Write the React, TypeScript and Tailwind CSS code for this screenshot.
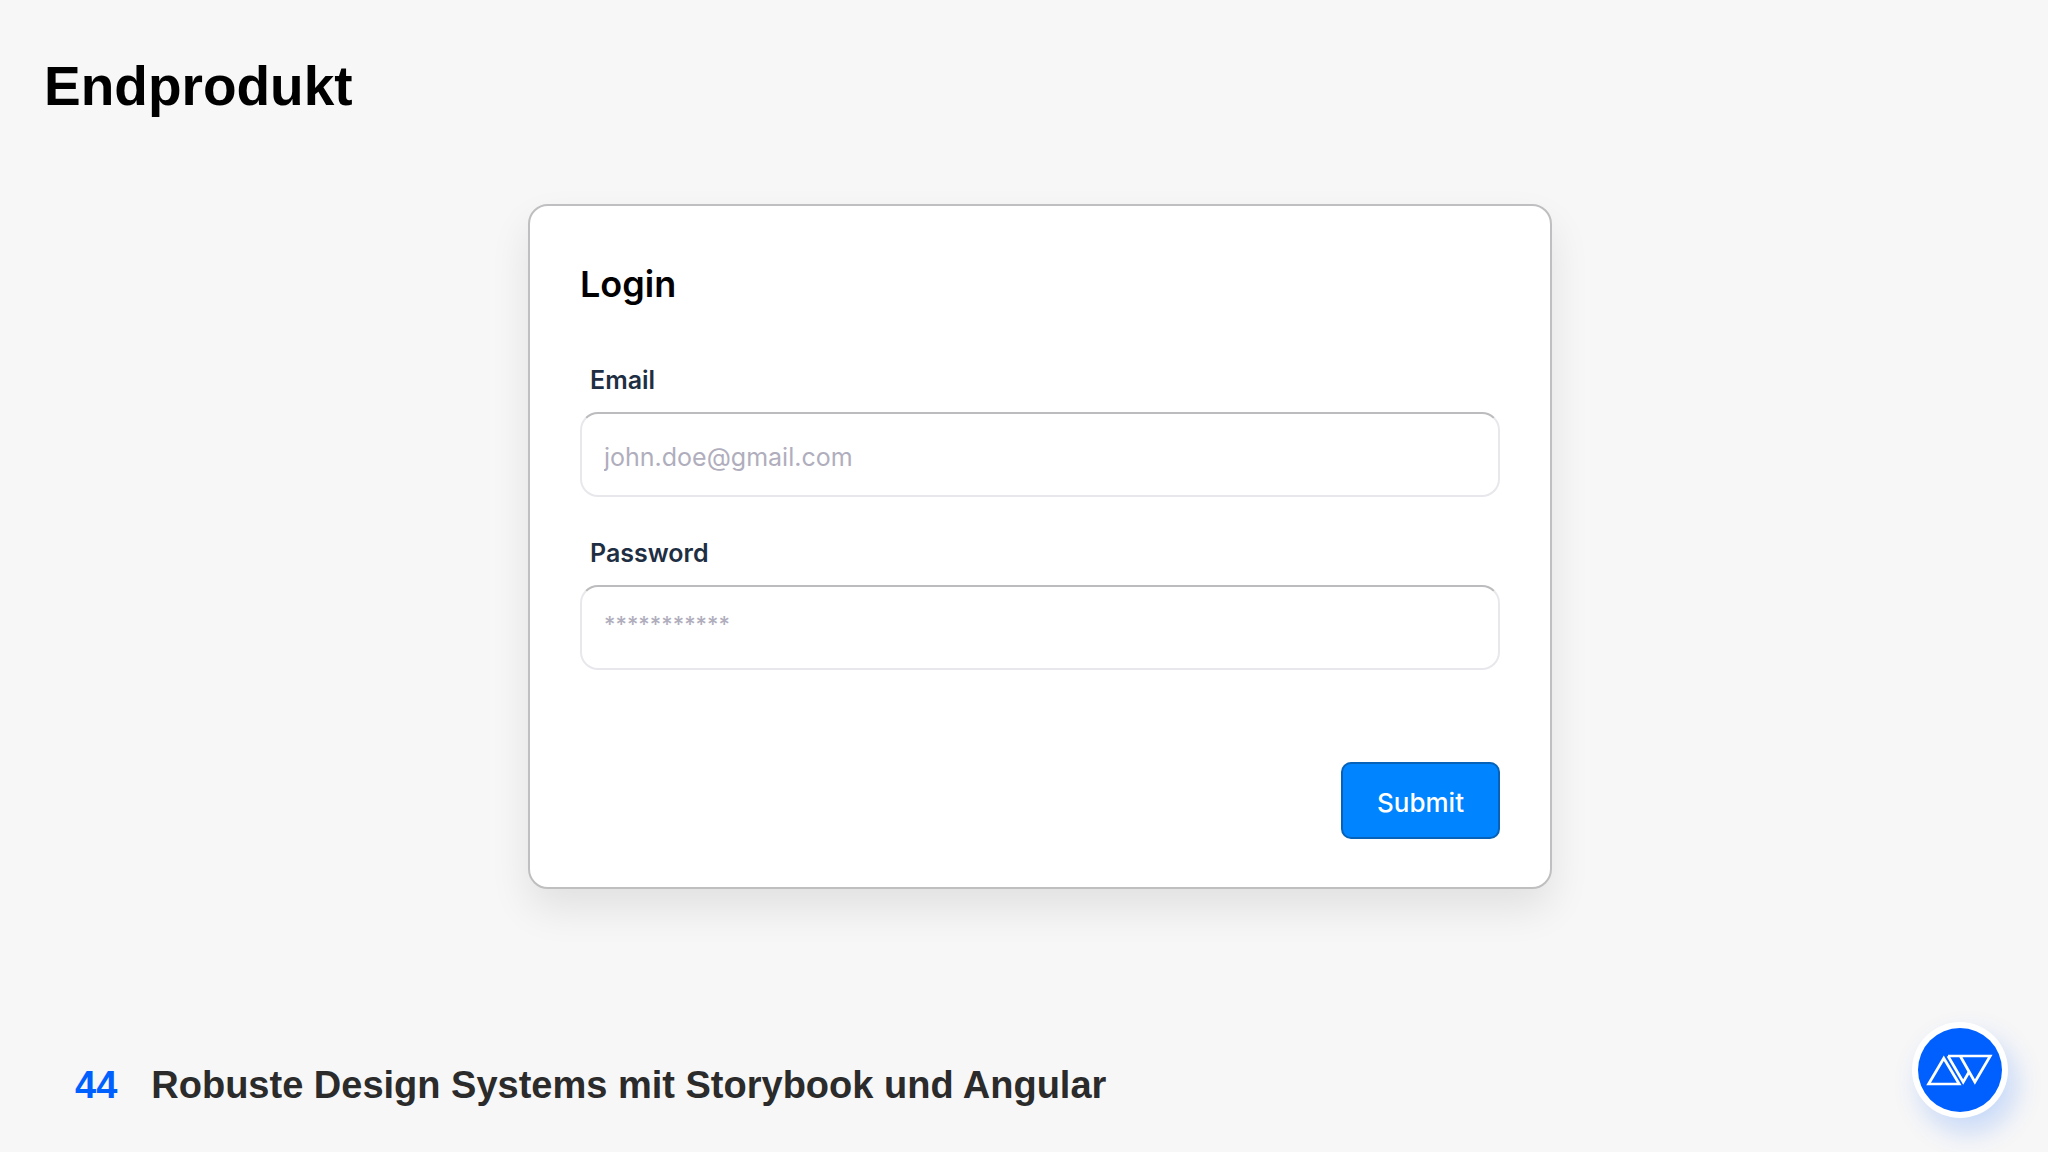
function Logo() {
  return (
    <svg viewBox="0 0 84 84" className="size-full" role="img" aria-label="AW">
      <circle cx="42" cy="42" r="42" fill="#0060ff" />
      <g fill="none" stroke="#fff" strokeWidth="2.7" strokeLinejoin="miter">
        <path d="M25.8 30.2 L41.2 56 H10.6 Z" />
        <path d="M30 28 H72.2 L56.9 54 L42.2 28" />
        <path d="M30 28 L45.2 54 L51 44" />
      </g>
    </svg>
  );
}

type FieldProps = {
  id: string;
  label: string;
  type: string;
  placeholder: string;
};

function Field({ id, label, type, placeholder }: FieldProps) {
  return (
    <div className="flex flex-col gap-4">
      <label htmlFor={id} className="px-2.5 text-[25px] leading-8 font-semibold text-[#1f2f43]">
        {label}
      </label>
      <input
        id={id}
        type={type}
        placeholder={placeholder}
        className="h-[85px] w-full rounded-[18px] border-2 border-[#e8e7ec] border-t-[#bcbcbe] bg-white px-[22px] pt-1 text-[25px] text-[#1f2f43] outline-none placeholder:text-[#b0aebd] [&[type=password]]:pt-0 [&[type=password]]:pb-2 [&[type=password]]:text-[22px] [&[type=password]]:font-medium"
      />
    </div>
  );
}

export default function App() {
  return (
    <div className="flex min-h-screen flex-col bg-[#f7f7f7] font-['Inter',sans-serif]">
      <header className="px-11 pt-13">
        <h1 className="font-['Liberation_Sans',sans-serif] text-[55px] leading-[68px] font-bold text-black">
          Endprodukt
        </h1>
      </header>

      <main className="flex flex-1 justify-center pt-[84px]">
        <form
          onSubmit={(e) => e.preventDefault()}
          className="ml-8 flex w-1/2 flex-col self-start rounded-[20px] border-2 border-[#bfbfc1] bg-white px-[50px] pt-14 pb-12 shadow-[0_20px_40px_rgba(0,0,0,0.09)]"
        >
          <h2 className="text-[36px] leading-11 font-semibold text-black">Login</h2>
          <div className="mt-[58px] flex flex-col gap-10">
            <Field id="email" label="Email" type="email" placeholder="john.doe@gmail.com" />
            <Field id="password" label="Password" type="password" placeholder="***********" />
          </div>
          <button
            type="submit"
            className="mt-[92px] h-[77px] self-end rounded-[10px] border-2 border-[#0562b8] bg-[#0084ff] px-[34px] pt-1 text-[26px] font-medium text-white"
          >
            Submit
          </button>
        </form>
      </main>

      <footer className="flex items-center justify-between pr-10 pb-[34px] pl-[75px] font-['Liberation_Sans',sans-serif] text-[38px] leading-11 font-bold">
        <p className="flex gap-[34px] pt-[30px] text-[#2b2b2b]">
          <span className="text-[#0060ff]">44</span>
          <span>Robuste Design Systems mit Storybook und Angular</span>
        </p>
        <div className="size-24 rounded-full bg-white p-1.5 shadow-[8px_14px_28px_rgba(0,96,255,0.2)]">
          <Logo />
        </div>
      </footer>
    </div>
  );
}
